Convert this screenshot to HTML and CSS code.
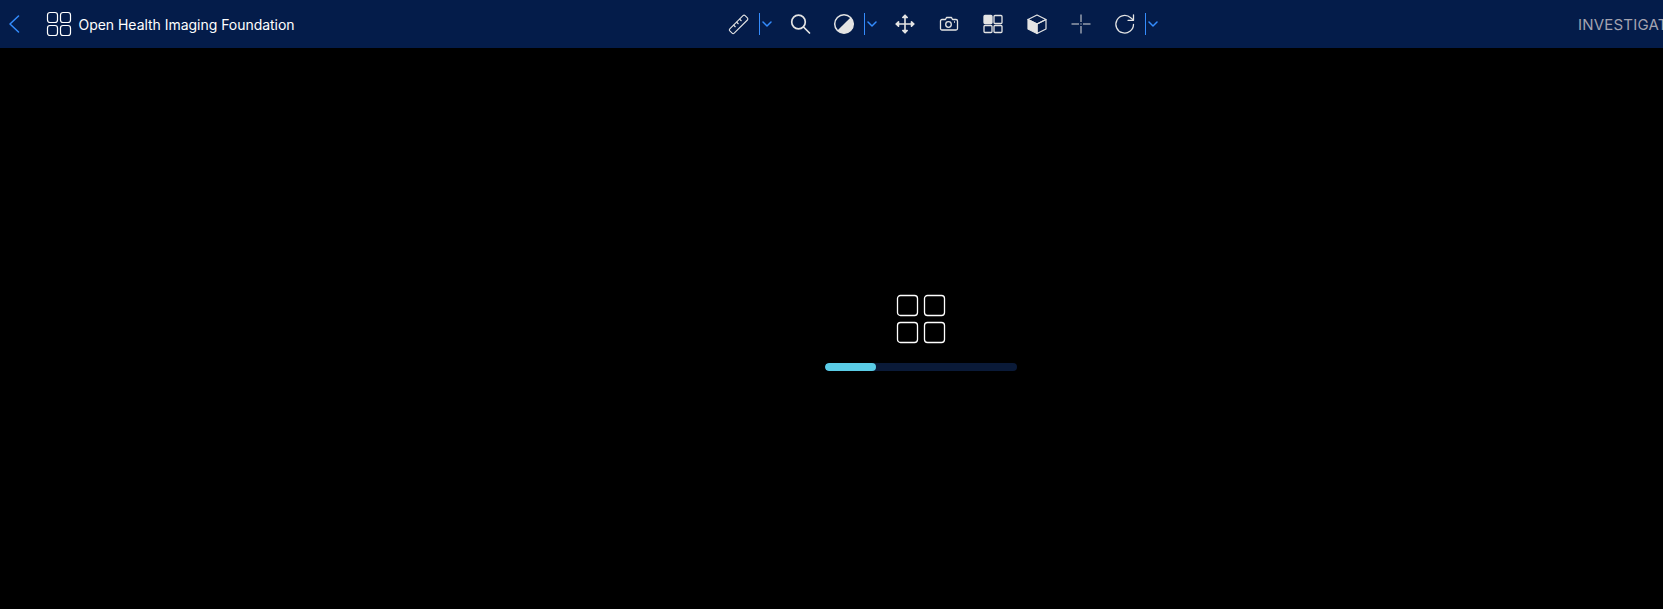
FILE: index.html
```html
<!DOCTYPE html>
<html lang="en">
<head>
<meta charset="utf-8">
<title>Open Health Imaging Foundation</title>
<link rel="stylesheet" href="styles.css">
</head>
<body>
<div class="page">
  <header class="topbar">
    <div class="brand">
      <svg class="back" width="12" height="18" viewBox="0 0 12 18"><path d="M10.500 1 2 9l8.500 8" fill="none" stroke="#348cfd" stroke-width="1.500" stroke-linecap="round" stroke-linejoin="round"/></svg>
      <svg class="logo" width="26" height="26" viewBox="0 0 26 26" fill="none" stroke="#fff" stroke-width="1.200"><rect x="1.500" y="1.500" width="10" height="10" rx="2.500"/><rect x="14.500" y="1.500" width="10" height="10" rx="2.500"/><rect x="1.500" y="14.500" width="10" height="10" rx="2.500"/><rect x="14.500" y="14.500" width="10" height="10" rx="2.500"/></svg>
      <span class="brand-name">Open Health Imaging Foundation</span>
    </div>
    <nav class="tools">
      <div class="tool split">
        <svg width="22" height="22" viewBox="0 0 22 22" fill="none" stroke="#e4e4e4" stroke-width="1.100" stroke-linejoin="round"><path d="M1.800 15.800 15 2.600a1.500 1.500 0 0 1 2.100 0l2.300 2.300a1.500 1.500 0 0 1 0 2.100L6.200 20.200a1.500 1.500 0 0 1-2.100 0l-2.300-2.300a1.500 1.500 0 0 1 0-2.100Z"/><path d="m5.500 12 2 2M8.500 9l2 2M11.500 6l2 2"/></svg>
      </div>
      <div class="drop"><svg width="10" height="6" viewBox="0 0 10 6"><path d="m1 1 4 4 4-4" fill="none" stroke="#348cfd" stroke-width="1.500" stroke-linecap="round" stroke-linejoin="round"/></svg></div>
      <div class="tool">
        <svg width="22" height="22" viewBox="0 0 22 22" fill="none" stroke="#e4e4e4" stroke-width="1.700" stroke-linecap="round"><circle cx="9.500" cy="9" r="6.800"/><path d="m14.500 14 6 6"/></svg>
      </div>
      <div class="tool split">
        <svg width="22" height="22" viewBox="0 0 22 22"><circle cx="11" cy="11" r="9.300" fill="none" stroke="#e4e4e4" stroke-width="1.500"/><path d="M17.600 4.400A9.300 9.300 0 0 1 4.400 17.600Z" fill="#e4e4e4"/></svg>
      </div>
      <div class="drop"><svg width="10" height="6" viewBox="0 0 10 6"><path d="m1 1 4 4 4-4" fill="none" stroke="#348cfd" stroke-width="1.500" stroke-linecap="round" stroke-linejoin="round"/></svg></div>
      <div class="tool">
        <svg width="22" height="22" viewBox="0 0 22 22" fill="none" stroke="#e4e4e4" stroke-width="1.600" stroke-linecap="round" stroke-linejoin="round"><path d="M11 3v16M2.500 11h17"/><path d="M8.800 4.500 11 2.200l2.200 2.300ZM8.800 17.500l2.200 2.300 2.200-2.300ZM4.500 8.800 2.200 11l2.300 2.200ZM17.500 8.800l2.300 2.200-2.300 2.200Z" fill="#e4e4e4"/></svg>
      </div>
      <div class="tool">
        <svg width="22" height="22" viewBox="0 0 22 22" fill="none" stroke="#e4e4e4" stroke-width="1.300" stroke-linejoin="round"><path d="M2.500 8a1.500 1.500 0 0 1 1.500-1.500h3.500l1-2h5l1 2H18a1.500 1.500 0 0 1 1.500 1.500v7.500A1.500 1.500 0 0 1 18 17H4a1.500 1.500 0 0 1-1.500-1.500Z"/><circle cx="10.500" cy="11.500" r="2.800"/><path d="M16 9h1"/></svg>
      </div>
      <div class="tool">
        <svg width="22" height="22" viewBox="0 0 22 22" fill="none" stroke="#e4e4e4" stroke-width="1.300"><rect x="2" y="2.500" width="8" height="8" rx="1" fill="#e4e4e4"/><rect x="12" y="2.500" width="8" height="8" rx="1"/><rect x="2" y="12.500" width="8" height="7" rx="1"/><rect x="12" y="12.500" width="8" height="7" rx="1"/></svg>
      </div>
      <div class="tool">
        <svg width="22" height="22" viewBox="0 0 22 22" fill="none" stroke="#e4e4e4" stroke-width="1.200" stroke-linejoin="round"><path d="M11 11 2 6.500V16l9 4.500Z" fill="#e4e4e4"/><path d="M11 2 2 6.500l9 4.500 9-4.500Z"/><path d="M11 11v9.500l9-4.500V6.500Z"/></svg>
      </div>
      <div class="tool">
        <svg width="22" height="22" viewBox="0 0 22 22" fill="none" stroke="#dcdcdc" stroke-width="1"><path d="M1.500 11h7.500M13 11h7.500M11 1.500V9M11 13v7.500"/><path d="M10.500 11h1" stroke="#fff"/></svg>
      </div>
      <div class="tool split">
        <svg width="22" height="22" viewBox="0 0 22 22" fill="none" stroke="#e4e4e4" stroke-width="1.300" stroke-linecap="round" stroke-linejoin="round"><path d="M19.500 11.500a8.800 8.800 0 1 1-2.800-6.700l2.300 2"/><path d="M19.500 1.800v5.500h-5.500"/></svg>
      </div>
      <div class="drop"><svg width="10" height="6" viewBox="0 0 10 6"><path d="m1 1 4 4 4-4" fill="none" stroke="#348cfd" stroke-width="1.500" stroke-linecap="round" stroke-linejoin="round"/></svg></div>
    </nav>
    <div class="notice">INVESTIGATIONAL USE ONLY</div>
  </header>
  <main class="viewer">
    <div class="loader">
      <svg width="50" height="50" viewBox="0 0 50 50" fill="none" stroke="#fff" stroke-width="1.300"><rect x="1.500" y="1.500" width="20" height="20" rx="3"/><rect x="28.500" y="1.500" width="20" height="20" rx="3"/><rect x="1.500" y="28.500" width="20" height="20" rx="3"/><rect x="28.500" y="28.500" width="20" height="20" rx="3"/></svg>
      <div class="track"><div class="fill"></div></div>
    </div>
  </main>
</div>
</body>
</html>
```
FILE: styles.css
```css
html, body {
  margin: 0;
  height: 100%;
  background: #000;
  overflow: hidden;
}

.page {
  width: 1842px;
  height: 609px;
  display: flex;
  flex-direction: column;
  font-family: Inter, "Liberation Sans", sans-serif;
}

.topbar {
  height: 48px;
  flex: none;
  background: #041c4a;
  display: flex;
  align-items: center;
}

.brand {
  width: 728px;
  flex: none;
  display: flex;
  align-items: center;
}

.back {
  margin-left: 8px;
}

.logo {
  margin-left: 26px;
}

.brand-name {
  margin-left: 6.500px;
  color: #fff;
  font-size: 14px;
  letter-spacing: -0.03px;
}

.tools {
  display: flex;
  align-items: center;
}

.tool {
  width: 22px;
  height: 22px;
  margin-right: 22px;
}

.tool svg {
  display: block;
}

.tool.split {
  margin-right: 2px;
  padding-right: 9px;
  border-right: 1px solid #348cfd;
}

.drop {
  width: 10px;
  margin-right: 17px;
  display: flex;
  justify-content: center;
}

.drop svg {
  display: block;
}

.notice {
  margin-left: 403px;
  color: #a3a3b0;
  font-size: 15px;
  letter-spacing: 0.2px;
  white-space: nowrap;
}

.viewer {
  flex: 1;
  background: #000;
  display: flex;
  align-items: center;
  justify-content: center;
}

.loader {
  display: flex;
  flex-direction: column;
  align-items: center;
  gap: 19px;
  margin-top: 8px;
}

.loader svg {
  display: block;
}

.track {
  width: 192px;
  height: 8px;
  border-radius: 4px;
  background: #0a1a38;
  overflow: hidden;
}

.fill {
  width: 51px;
  height: 100%;
  border-radius: 4px;
  background: #5acce6;
}
```
